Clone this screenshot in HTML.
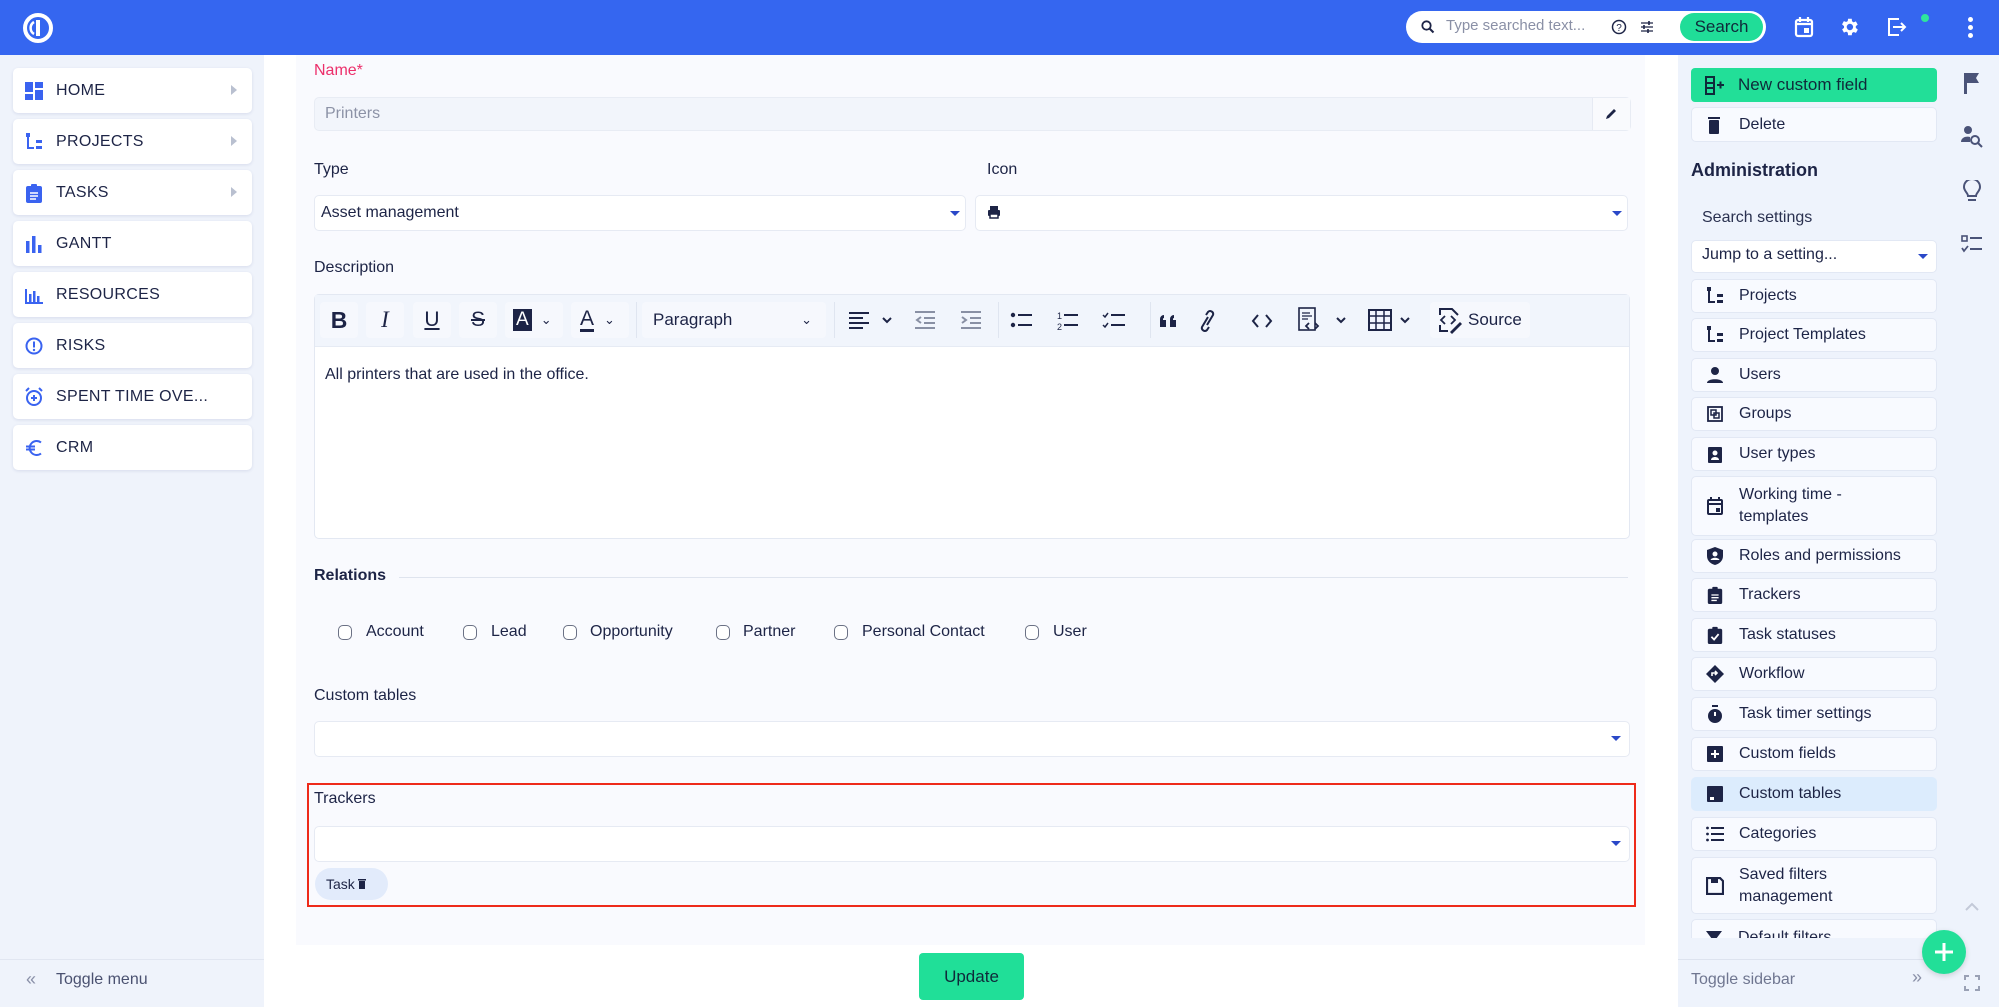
<!DOCTYPE html>
<html><head><meta charset="utf-8">
<style>
*{box-sizing:border-box;margin:0;padding:0}
body{width:1999px;height:1007px;overflow:hidden;font-family:"Liberation Sans",Arial,sans-serif;color:#1d2446;background:#fff;position:relative;font-size:16px}
.a{position:absolute}
#hdr{left:0;top:0;width:1999px;height:55px;background:#3566f0}
#lsb{left:0;top:55px;width:264px;height:952px;background:#eff3fb}
.mi{position:absolute;left:13px;width:239px;height:45px;background:#fff;border-radius:5px;box-shadow:0 1px 3px rgba(40,60,120,.12);display:flex;align-items:center;font-size:16px;letter-spacing:.3px;color:#1d2446}
.mi svg{position:absolute;left:12px}
.mi span{position:absolute;left:43px}
.mi i{position:absolute;left:218px;top:17px;width:0;height:0;border-left:6px solid #b9c0d0;border-top:5px solid transparent;border-bottom:5px solid transparent}
#main{left:264px;top:55px;width:1414px;height:952px;background:#fff}
#card{left:296px;top:55px;width:1349px;height:890px;background:#f9fafe}
.lbl{position:absolute;font-size:16px;color:#1d2446}
.inp{position:absolute;background:#fff;border:1px solid #e6eaf3;border-radius:5px}
.car{position:absolute;width:0;height:0;border-top:5px solid #2a48c8;border-left:5px solid transparent;border-right:5px solid transparent}
#rsb{left:1678px;top:55px;width:321px;height:952px;background:#eef3fc}
.ri{position:absolute;left:1691px;width:246px;height:34px;background:#f8faff;border:1px solid #e2e8f4;border-radius:5px;font-size:16px;color:#1d2446}
.ri svg{position:absolute;left:14px;top:50%;margin-top:-9px}
.ri span{position:absolute;left:47px;top:50%;transform:translateY(-50%);line-height:22px}
.tb{position:absolute;top:302px;height:36px;background:#f6f8fd;border-radius:4px;display:flex;align-items:center;justify-content:center}
.cb{position:absolute;width:14px;height:15px;border:1.5px solid #6b7185;border-radius:5px;background:#fff}
</style></head><body>
<div id="hdr" class="a"></div>
<svg class="a" style="left:22px;top:12px" width="32" height="32" viewBox="0 0 32 32"><circle cx="16" cy="16" r="13" fill="none" stroke="#fff" stroke-width="4"/><path d="M16 8v16" stroke="#fff" stroke-width="4"/><path d="M12 10a7 7 0 0 0 0 12" stroke="#fff" stroke-width="2.5" fill="none"/></svg>
<div class="a" style="left:1406px;top:11px;width:360px;height:32px;background:#fff;border-radius:16px"></div>
<svg class="a" style="left:1420px;top:19px" width="16" height="16" viewBox="0 0 16 16"><circle cx="6.5" cy="6.5" r="4.2" fill="none" stroke="#1d2446" stroke-width="1.8"/><path d="M9.5 9.5l4 4" stroke="#1d2446" stroke-width="2"/></svg>
<div class="a" style="left:1446px;top:17px;font-size:15px;color:#8a90a6">Type searched text...</div>
<svg class="a" style="left:1611px;top:19px" width="16" height="16" viewBox="0 0 16 16"><circle cx="8" cy="8" r="6.5" fill="none" stroke="#1d2446" stroke-width="1.5"/><text x="8" y="12" font-size="10" text-anchor="middle" fill="#1d2446" font-family="Liberation Sans">?</text></svg>
<svg class="a" style="left:1639px;top:19px" width="16" height="16" viewBox="0 0 16 16"><path d="M2 4h12M2 8h12M2 12h12" stroke="#1d2446" stroke-width="1.3"/><path d="M10 2v4M5 6v4M9 10v4" stroke="#1d2446" stroke-width="1.6"/></svg>
<div class="a" style="left:1680px;top:13px;width:83px;height:28px;background:#20dd98;border-radius:14px;font-size:17px;color:#0f2a3a;text-align:center;line-height:28px">Search</div>
<svg class="a" style="left:1794px;top:16px" width="20" height="22" viewBox="0 0 20 22"><rect x="2" y="4" width="16" height="16" rx="2" fill="none" stroke="#fff" stroke-width="2.2"/><path d="M2 8h16M6 1v5M14 1v5" stroke="#fff" stroke-width="2.2"/><rect x="10" y="12" width="5" height="5" fill="#fff"/></svg>
<svg class="a" style="left:1838px;top:16px" width="22" height="22" viewBox="0 0 24 24"><path fill="#fff" d="M19.4 13a7.5 7.5 0 0 0 0-2l2.1-1.6-2-3.5-2.5 1a7.5 7.5 0 0 0-1.7-1L15 3h-4l-.4 2.6a7.5 7.5 0 0 0-1.7 1l-2.5-1-2 3.5L6.6 11a7.5 7.5 0 0 0 0 2l-2.1 1.6 2 3.5 2.5-1a7.5 7.5 0 0 0 1.7 1L11 21h4l.4-2.6a7.5 7.5 0 0 0 1.7-1l2.5 1 2-3.5zM13 15.5a3.5 3.5 0 1 1 0-7 3.5 3.5 0 0 1 0 7z"/></svg>
<svg class="a" style="left:1886px;top:16px" width="22" height="22" viewBox="0 0 22 22"><path d="M13 3H3v16h10" fill="none" stroke="#fff" stroke-width="2"/><path d="M7 11h12M15 7l4 4-4 4" fill="none" stroke="#fff" stroke-width="2"/></svg>
<div class="a" style="left:1919px;top:12px;width:12px;height:12px;border-radius:6px;background:#2ee59d;border:2px solid #3566f0"></div>
<div class="a" style="left:1968px;top:17px;width:5px;height:5px;border-radius:3px;background:#fff;box-shadow:0 8px 0 #fff,0 16px 0 #fff"></div>

<div id="lsb" class="a"></div>
<div class="mi" style="top:68px"><svg width="18" height="18" viewBox="0 0 18 18" fill="#3a63f0"><rect x="0" y="0" width="8" height="10"/><rect x="10" y="0" width="8" height="6"/><rect x="0" y="12" width="8" height="6"/><rect x="10" y="8" width="8" height="10"/></svg><span>HOME</span><i></i></div>
<div class="mi" style="top:119px"><svg width="18" height="18" viewBox="0 0 18 18" fill="#3a63f0"><rect x="1" y="0" width="4" height="4"/><path d="M3 4v11h6" stroke="#3a63f0" stroke-width="2" fill="none"/><rect x="11" y="7" width="6" height="3"/><rect x="11" y="13" width="6" height="3"/></svg><span>PROJECTS</span><i></i></div>
<div class="mi" style="top:170px"><svg width="18" height="20" viewBox="0 0 18 20"><rect x="1" y="3" width="16" height="17" rx="2" fill="#3a63f0"/><rect x="6" y="1" width="6" height="4" rx="1" fill="#3a63f0"/><path d="M5 10h8M5 13h8M5 16h6" stroke="#fff" stroke-width="1.5"/></svg><span>TASKS</span><i></i></div>
<div class="mi" style="top:221px"><svg width="18" height="18" viewBox="0 0 18 18" fill="#3a63f0"><rect x="1" y="6" width="3.5" height="12"/><rect x="7" y="1" width="3.5" height="17"/><rect x="13" y="10" width="3.5" height="8"/></svg><span>GANTT</span></div>
<div class="mi" style="top:272px"><svg width="18" height="18" viewBox="0 0 18 18" fill="#3a63f0"><rect x="0" y="3" width="2" height="15"/><rect x="4" y="8" width="2.5" height="8"/><rect x="8" y="5" width="2.5" height="11"/><rect x="12" y="10" width="2.5" height="6"/><rect x="0" y="16" width="18" height="2"/></svg><span>RESOURCES</span></div>
<div class="mi" style="top:323px"><svg width="18" height="18" viewBox="0 0 18 18"><circle cx="9" cy="9" r="7.5" fill="none" stroke="#3a63f0" stroke-width="2"/><path d="M9 4.5v6" stroke="#3a63f0" stroke-width="2"/><circle cx="9" cy="13" r="1.2" fill="#3a63f0"/></svg><span>RISKS</span></div>
<div class="mi" style="top:374px"><svg width="18" height="20" viewBox="0 0 18 20"><circle cx="9" cy="11" r="7" fill="none" stroke="#3a63f0" stroke-width="2"/><path d="M9 8v6M6 11h6M1 4l3-3M17 4l-3-3" stroke="#3a63f0" stroke-width="2"/></svg><span>SPENT TIME OVE...</span></div>
<div class="mi" style="top:425px"><svg width="18" height="18" viewBox="0 0 18 18"><path d="M16 3.5A7 7 0 1 0 16 14.5" fill="none" stroke="#3a63f0" stroke-width="2"/><path d="M1 7.5h9M1 10.5h9" stroke="#3a63f0" stroke-width="2"/></svg><span>CRM</span></div>
<div class="a" style="left:0;top:959px;width:264px;height:1px;background:#e1e6f1"></div>
<div class="a" style="left:26px;top:969px;font-size:18px;color:#8a90a8">«</div>
<div class="a" style="left:56px;top:971px;font-size:16px;color:#4a5170">Toggle menu</div>

<div id="main" class="a"></div>
<div id="card" class="a"></div>
<div class="lbl" style="left:314px;top:62px;color:#ec2f6b">Name*</div>
<div class="a" style="left:314px;top:97px;width:1317px;height:34px;background:#f2f5fb;border:1px solid #e8ecf4;border-radius:5px"></div>
<div class="a" style="left:325px;top:105px;color:#8c92a6;font-size:16px">Printers</div>
<div class="a" style="left:1592px;top:98px;width:38px;height:32px;background:#f9fafd;border-left:1px solid #e6eaf3"></div>
<svg class="a" style="left:1604px;top:107px" width="14" height="14" viewBox="0 0 14 14"><path d="M2 12l1-3 7-7 2 2-7 7z" fill="#1d2446"/></svg>
<div class="lbl" style="left:314px;top:161px">Type</div>
<div class="lbl" style="left:987px;top:161px">Icon</div>
<div class="inp" style="left:314px;top:195px;width:652px;height:36px"></div>
<div class="a" style="left:321px;top:204px;font-size:16px">Asset management</div>
<div class="car" style="left:950px;top:211px"></div>
<div class="inp" style="left:975px;top:195px;width:653px;height:36px"></div>
<svg class="a" style="left:987px;top:205px" width="14" height="14" viewBox="0 0 14 14" fill="#1d2446"><rect x="3" y="1" width="8" height="4"/><rect x="1" y="5" width="12" height="6" rx="1"/><rect x="3" y="9" width="8" height="4" fill="#fff" stroke="#1d2446" stroke-width="1.5"/></svg>
<div class="car" style="left:1612px;top:211px"></div>
<div class="lbl" style="left:314px;top:259px">Description</div>
<div class="a" style="left:314px;top:294px;width:1316px;height:245px;background:#fff;border:1px solid #e3e8f2;border-radius:5px"></div>
<div class="a" style="left:315px;top:295px;width:1314px;height:52px;background:#f1f5fc;border-bottom:1px solid #e6ebf4"></div>
<div class="tb" style="left:320px;width:38px;font-weight:bold;font-size:23px">B</div>
<div class="tb" style="left:366px;width:38px;font-style:italic;font-size:23px;font-family:'Liberation Serif',serif">I</div>
<div class="tb" style="left:413px;width:38px;font-size:21px;text-decoration:underline">U</div>
<div class="tb" style="left:459px;width:38px;font-size:21px;text-decoration:line-through">S</div>
<div class="tb" style="left:505px;width:58px;justify-content:flex-start;padding-left:8px"><span style="background:#1d2446;color:#fff;font-size:19px;padding:0 3px;line-height:22px">A</span><span style="margin-left:9px;font-size:13px">&#8964;</span></div>
<div class="tb" style="left:571px;width:58px;justify-content:flex-start;padding-left:9px"><span style="font-size:21px;border-bottom:3px solid #1d2446;line-height:20px">A</span><span style="margin-left:10px;font-size:13px">&#8964;</span></div>
<div class="a" style="left:636px;top:302px;width:1px;height:36px;background:#dfe5f0"></div>
<div class="tb" style="left:642px;width:184px;justify-content:space-between;padding:0 14px 0 11px;font-size:17px"><span>Paragraph</span><span style="font-size:13px">&#8964;</span></div>
<div class="a" style="left:834px;top:302px;width:1px;height:36px;background:#dfe5f0"></div>
<svg class="a" style="left:849px;top:310px" width="52" height="20" viewBox="0 0 52 20"><path d="M0 3h20M0 8h14M0 13h20M0 18h14" stroke="#1d2446" stroke-width="2"/><path d="M34 8l4 4 4-4" fill="none" stroke="#1d2446" stroke-width="2"/></svg>
<svg class="a" style="left:915px;top:310px" width="72" height="20" viewBox="0 0 72 20"><path d="M0 2h20M9 8h11M9 13h11M0 18h20M6 7l-4 3 4 3" fill="none" stroke="#8990a4" stroke-width="2"/><path d="M46 2h20M55 8h11M55 13h11M46 18h20M47 7l4 3-4 3" fill="none" stroke="#8990a4" stroke-width="2"/></svg>
<div class="a" style="left:998px;top:302px;width:1px;height:36px;background:#dfe5f0"></div>
<svg class="a" style="left:1010px;top:310px" width="130" height="20" viewBox="0 0 130 20"><circle cx="3" cy="5" r="2.2" fill="#1d2446"/><circle cx="3" cy="15" r="2.2" fill="#1d2446"/><path d="M8 5h14M8 15h14" stroke="#1d2446" stroke-width="2"/><text x="47" y="9" font-size="9" fill="#1d2446" font-family="Liberation Sans">1</text><text x="47" y="20" font-size="9" fill="#1d2446" font-family="Liberation Sans">2</text><path d="M54 5h14M54 15h14" stroke="#1d2446" stroke-width="2"/><path d="M93 5l2 2 3-4M93 15l2 2 3-4" fill="none" stroke="#1d2446" stroke-width="1.5"/><path d="M101 5h14M101 15h14" stroke="#1d2446" stroke-width="2"/></svg>
<div class="a" style="left:1150px;top:302px;width:1px;height:36px;background:#dfe5f0"></div>
<svg class="a" style="left:1158px;top:310px" width="120" height="22" viewBox="0 0 120 22"><path d="M2 9a4 4 0 0 1 4-4v3a1 1 0 0 0-1 1v1h3v7H2zM12 9a4 4 0 0 1 4-4v3a1 1 0 0 0-1 1v1h3v7h-6z" fill="#1d2446"/><path d="M54 5l-6 10a3 3 0 0 0 5 3l2-3M52 3l2-3a3 3 0 0 1 5 3l-6 10" fill="none" stroke="#1d2446" stroke-width="2" transform="translate(-4 2)"/><path d="M100 5l-5 6 5 6M108 5l5 6-5 6" fill="none" stroke="#1d2446" stroke-width="2"/></svg>
<svg class="a" style="left:1297px;top:306px" width="56" height="28" viewBox="0 0 56 28"><rect x="2" y="2" width="16" height="22" fill="none" stroke="#1d2446" stroke-width="1.6"/><path d="M5 7h8M5 10h10M5 13h6" stroke="#1d2446" stroke-width="1.3"/><path d="M12 17l-3 3 3 3M18 17l3 3-3 3" fill="none" stroke="#1d2446" stroke-width="1.8"/><path d="M40 12l4 4 4-4" fill="none" stroke="#1d2446" stroke-width="2"/></svg>
<svg class="a" style="left:1368px;top:309px" width="52" height="22" viewBox="0 0 52 22"><rect x="1" y="1" width="22" height="20" fill="none" stroke="#1d2446" stroke-width="2"/><path d="M1 7h22M1 14h22M8 1v20M16 1v20" stroke="#1d2446" stroke-width="1.5"/><path d="M33 9l4 4 4-4" fill="none" stroke="#1d2446" stroke-width="2"/></svg>
<div class="tb" style="left:1430px;width:100px;justify-content:flex-start;padding-left:6px;font-size:17px"><svg width="30" height="28" viewBox="0 0 30 28"><path d="M4 9V3h12l6 6M4 19v6h8" fill="none" stroke="#1d2446" stroke-width="2"/><path d="M9 10l-4 4 4 4M15 10l4 4-4 4" fill="none" stroke="#1d2446" stroke-width="1.8"/><path d="M14 26l10-10 2 2-10 10z" fill="#1d2446"/></svg><span style="margin-left:2px">Source</span></div>
<div class="a" style="left:325px;top:366px;font-size:16px">All printers that are used in the office.</div>
<div class="a" style="left:314px;top:567px;font-size:16px;font-weight:bold">Relations</div>
<div class="a" style="left:399px;top:577px;width:1229px;height:1px;background:#dfe4ee"></div>
<div class="cb" style="left:338px;top:625px"></div><div class="lbl" style="left:366px;top:623px">Account</div>
<div class="cb" style="left:463px;top:625px"></div><div class="lbl" style="left:491px;top:623px">Lead</div>
<div class="cb" style="left:563px;top:625px"></div><div class="lbl" style="left:590px;top:623px">Opportunity</div>
<div class="cb" style="left:716px;top:625px"></div><div class="lbl" style="left:743px;top:623px">Partner</div>
<div class="cb" style="left:834px;top:625px"></div><div class="lbl" style="left:862px;top:623px">Personal Contact</div>
<div class="cb" style="left:1025px;top:625px"></div><div class="lbl" style="left:1053px;top:623px">User</div>
<div class="lbl" style="left:314px;top:687px">Custom tables</div>
<div class="inp" style="left:314px;top:721px;width:1316px;height:36px"></div>
<div class="car" style="left:1611px;top:736px"></div>
<div class="a" style="left:307px;top:783px;width:1329px;height:124px;border:2.5px solid #ee2a1a"></div>
<div class="lbl" style="left:314px;top:790px">Trackers</div>
<div class="inp" style="left:314px;top:826px;width:1316px;height:36px"></div>
<div class="car" style="left:1611px;top:841px"></div>
<div class="a" style="left:315px;top:868px;width:73px;height:32px;border-radius:16px;background:#e2ebfb;font-size:14px;line-height:32px;padding-left:11px">Task<svg style="margin-left:3px" width="8" height="11" viewBox="0 0 8 11"><rect x="0" y="1" width="8" height="1.5" fill="#1d2446"/><rect x="1" y="3" width="6" height="8" fill="#1d2446"/></svg></div>
<div class="a" style="left:919px;top:953px;width:105px;height:47px;background:#20df98;border-radius:4px;font-size:17px;line-height:47px;text-align:center;color:#0f2a3a">Update</div>

<div id="rsb" class="a"></div>
<div class="a" style="left:1691px;top:68px;width:246px;height:34px;background:#22df98;border-radius:4px;font-size:17px;color:#0f2a3a"><svg class="a" style="left:14px;top:8px" width="22" height="19" viewBox="0 0 22 19"><rect x="1" y="1" width="8" height="17" fill="none" stroke="#0f2a3a" stroke-width="2"/><path d="M1 7h8M1 12h8M12 9h7M15.5 5.5v7" stroke="#0f2a3a" stroke-width="2"/></svg><span class="a" style="left:47px;top:7px">New custom field</span></div>
<div class="ri" style="top:107px;height:35px"><svg width="18" height="18" viewBox="0 0 18 18" fill="#1d2446"><rect x="2" y="1" width="12" height="2"/><rect x="3" y="4" width="10" height="14" rx="1"/></svg><span>Delete</span></div>
<div class="a" style="left:1691px;top:160px;font-size:18px;font-weight:bold">Administration</div>
<div class="a" style="left:1702px;top:209px;font-size:16px;color:#2a3150">Search settings</div>
<div class="a" style="left:1691px;top:240px;width:246px;height:33px;background:#fff;border:1px solid #e2e8f4;border-radius:5px"></div>
<div class="a" style="left:1702px;top:246px;font-size:16px">Jump to a setting...</div>
<div class="car" style="left:1918px;top:254px"></div>
<div class="ri" style="top:279px"><svg width="18" height="18" viewBox="0 0 18 18" fill="#1d2446"><rect x="1" y="0" width="4" height="4"/><path d="M3 4v11h6" stroke="#1d2446" stroke-width="2" fill="none"/><rect x="11" y="7" width="6" height="3"/><rect x="11" y="13" width="6" height="3"/></svg><span>Projects</span></div>
<div class="ri" style="top:318px"><svg width="18" height="18" viewBox="0 0 18 18" fill="#1d2446"><rect x="1" y="0" width="4" height="4"/><path d="M3 4v11h6" stroke="#1d2446" stroke-width="2" fill="none"/><rect x="11" y="7" width="6" height="3"/><rect x="11" y="13" width="6" height="3"/></svg><span>Project Templates</span></div>
<div class="ri" style="top:358px"><svg width="18" height="18" viewBox="0 0 18 18" fill="#1d2446"><circle cx="9" cy="5" r="4"/><path d="M1 17c0-5 16-5 16 0z"/></svg><span>Users</span></div>
<div class="ri" style="top:397px"><svg width="18" height="18" viewBox="0 0 18 18"><rect x="2" y="2" width="14" height="14" fill="none" stroke="#1d2446" stroke-width="1.8"/><rect x="5" y="5" width="5" height="5" fill="none" stroke="#1d2446" stroke-width="1.5"/><rect x="8" y="8" width="5" height="5" fill="none" stroke="#1d2446" stroke-width="1.5"/></svg><span>Groups</span></div>
<div class="ri" style="top:437px"><svg width="18" height="18" viewBox="0 0 18 18"><rect x="2" y="2" width="14" height="16" rx="1" fill="#1d2446"/><circle cx="9" cy="8" r="2.5" fill="#fff"/><path d="M5 15c0-4 8-4 8 0z" fill="#fff"/></svg><span>User types</span></div>
<div class="ri" style="top:476px;height:60px"><svg width="18" height="18" viewBox="0 0 18 18"><rect x="2" y="3" width="14" height="14" rx="1" fill="none" stroke="#1d2446" stroke-width="2"/><path d="M2 7h14M5 0v4M13 0v4" stroke="#1d2446" stroke-width="2"/><rect x="10" y="11" width="4" height="4" fill="#1d2446"/></svg><span>Working time -<br>templates</span></div>
<div class="ri" style="top:539px"><svg width="18" height="18" viewBox="0 0 18 18"><path d="M9 0l8 3v6c0 5-4 8-8 9-4-1-8-4-8-9V3z" fill="#1d2446"/><circle cx="9" cy="7" r="2.5" fill="#fff"/><path d="M4.5 13c1-3 8-3 9 0" fill="#fff"/></svg><span>Roles and permissions</span></div>
<div class="ri" style="top:578px"><svg width="18" height="18" viewBox="0 0 18 20"><rect x="1" y="3" width="16" height="17" rx="2" fill="#1d2446"/><rect x="6" y="1" width="6" height="4" rx="1" fill="#1d2446"/><path d="M5 10h8M5 13h8M5 16h6" stroke="#fff" stroke-width="1.5"/></svg><span>Trackers</span></div>
<div class="ri" style="top:618px"><svg width="18" height="18" viewBox="0 0 18 20"><rect x="1" y="3" width="16" height="17" rx="2" fill="#1d2446"/><rect x="6" y="1" width="6" height="4" rx="1" fill="#1d2446"/><path d="M5 12l3 3 5-6" stroke="#fff" stroke-width="2" fill="none"/></svg><span>Task statuses</span></div>
<div class="ri" style="top:657px"><svg width="18" height="18" viewBox="0 0 18 18"><path d="M9 0l9 9-9 9-9-9z" fill="#1d2446"/><path d="M6 11V8h5M9 6l2 2-2 2" fill="none" stroke="#fff" stroke-width="1.6"/></svg><span>Workflow</span></div>
<div class="ri" style="top:697px"><svg width="18" height="18" viewBox="0 0 18 18"><circle cx="9" cy="11" r="7" fill="#1d2446"/><rect x="6" y="0" width="6" height="2" fill="#1d2446"/><path d="M9 7v4" stroke="#fff" stroke-width="2"/></svg><span>Task timer settings</span></div>
<div class="ri" style="top:737px"><svg width="18" height="18" viewBox="0 0 18 18"><rect x="1" y="1" width="16" height="16" rx="1" fill="#1d2446"/><path d="M9 5v8M5 9h8" stroke="#fff" stroke-width="2"/></svg><span>Custom fields</span></div>
<div class="ri" style="top:777px;background:#dcecfd;border-color:#dcecfd"><svg width="18" height="18" viewBox="0 0 18 18"><rect x="1" y="1" width="16" height="16" rx="1" fill="#1d2446"/><rect x="4" y="12" width="4" height="3" fill="#fff"/></svg><span>Custom tables</span></div>
<div class="ri" style="top:817px"><svg width="18" height="18" viewBox="0 0 18 18"><path d="M5 3h13M5 9h13M5 15h13" stroke="#1d2446" stroke-width="2"/><circle cx="1.5" cy="3" r="1.4" fill="#1d2446"/><circle cx="1.5" cy="9" r="1.4" fill="#1d2446"/><circle cx="1.5" cy="15" r="1.4" fill="#1d2446"/></svg><span>Categories</span></div>
<div class="ri" style="top:857px;height:57px"><svg width="18" height="18" viewBox="0 0 18 18"><path d="M1 1h13l3 3v13H1z" fill="none" stroke="#1d2446" stroke-width="2.2"/><rect x="5" y="1" width="7" height="5" fill="#1d2446"/></svg><span>Saved filters<br>management</span></div>
<div class="a" style="left:1691px;top:919px;width:246px;height:19px;overflow:hidden"><div style="position:absolute;left:0;top:0;width:246px;height:34px;background:#f8faff;border:1px solid #e2e8f4;border-radius:5px"></div><svg style="position:absolute;left:14px;top:11px" width="18" height="10" viewBox="0 0 18 10"><path d="M1 1h16l-6 8H7z" fill="#1d2446"/></svg><span style="position:absolute;left:47px;top:10px;font-size:16px">Default filters</span></div>
<div class="a" style="left:1678px;top:959px;width:273px;height:1px;background:#dde3ef"></div>
<div class="a" style="left:1691px;top:971px;font-size:16px;color:#6f7690">Toggle sidebar</div>
<div class="a" style="left:1912px;top:967px;font-size:18px;color:#8a90a8">»</div>
<svg class="a" style="left:1962px;top:72px" width="20" height="22" viewBox="0 0 20 22"><path d="M2 1h15l-3 5 3 5H5v11H2z" fill="#4a5378"/></svg>
<svg class="a" style="left:1960px;top:125px" width="24" height="24" viewBox="0 0 24 24"><circle cx="8" cy="5" r="4" fill="#4a5378"/><path d="M1 17c0-5 6-6 9-5v5z" fill="#4a5378"/><circle cx="15" cy="15" r="4" fill="none" stroke="#4a5378" stroke-width="2"/><path d="M18 18l4 4" stroke="#4a5378" stroke-width="2"/></svg>
<svg class="a" style="left:1963px;top:180px" width="18" height="24" viewBox="0 0 18 24"><path d="M5 16c0-3-4-5-4-9a8 8 0 0 1 16 0c0 4-4 6-4 9z" fill="none" stroke="#4a5378" stroke-width="2"/><path d="M5 20h8" stroke="#4a5378" stroke-width="2"/></svg>
<svg class="a" style="left:1961px;top:235px" width="22" height="20" viewBox="0 0 22 20"><rect x="1" y="1" width="5" height="5" fill="none" stroke="#4a5378" stroke-width="1.6"/><path d="M9 3h12M9 14h12" stroke="#4a5378" stroke-width="2"/><path d="M1 13l2 3 4-5" fill="none" stroke="#4a5378" stroke-width="1.8"/></svg>
<svg class="a" style="left:1964px;top:902px" width="16" height="10" viewBox="0 0 16 10"><path d="M2 8l6-6 6 6" fill="none" stroke="#c3c9d8" stroke-width="2"/></svg>
<div class="a" style="left:1922px;top:930px;width:44px;height:44px;border-radius:22px;background:#22df98;box-shadow:0 2px 6px rgba(0,0,0,.15)"></div>
<svg class="a" style="left:1932px;top:940px" width="24" height="24" viewBox="0 0 24 24"><path d="M12 3v18M3 12h18" stroke="#fff" stroke-width="3"/></svg>
<svg class="a" style="left:1964px;top:975px" width="16" height="16" viewBox="0 0 16 16"><path d="M1 5V1h4M11 1h4v4M15 11v4h-4M5 15H1v-4" fill="none" stroke="#9aa1b5" stroke-width="2"/></svg>
</body></html>
